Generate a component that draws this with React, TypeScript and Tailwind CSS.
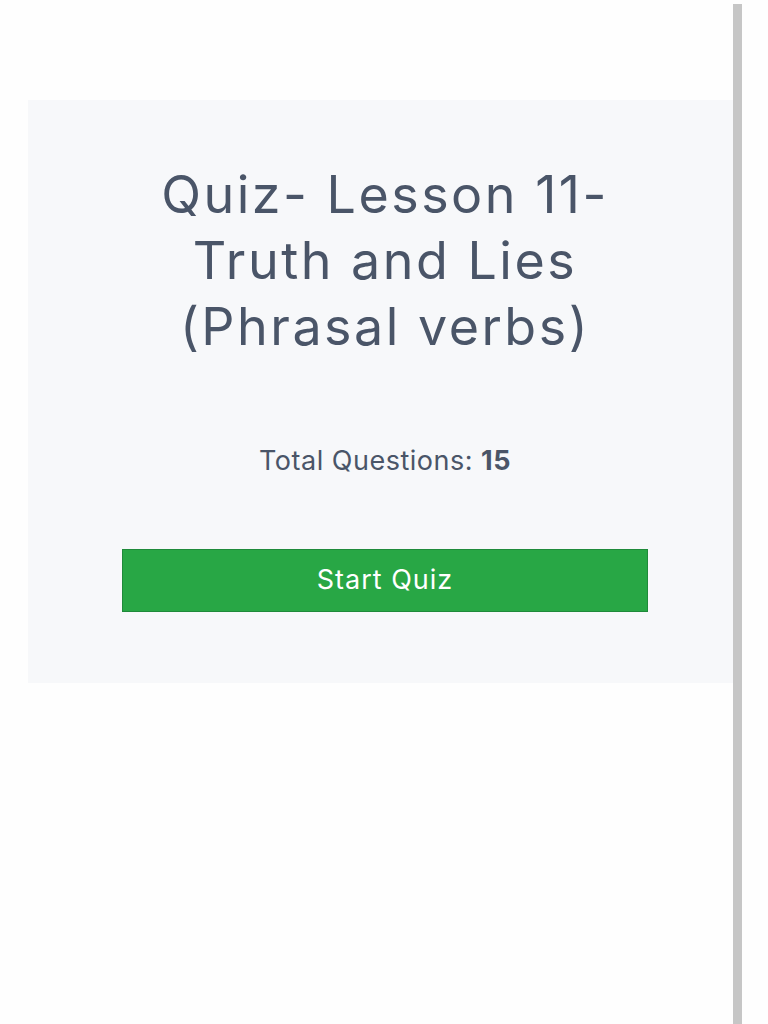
import React from 'react';

const quiz = {
  title: 'Quiz- Lesson 11- Truth and Lies (Phrasal verbs)',
  totalQuestions: 15,
};

export default function App() {
  return (
    <div
      className="relative h-[1024px] w-[768px] bg-[#fefefe] text-[#4a5568]"
      style={{ fontFamily: 'Inter, "Noto Sans", sans-serif' }}
    >
      <main className="pt-[100px] pr-[26px] pl-[28px]">
        {/* Quiz intro card */}
        <section className="flex h-[583px] flex-col items-center bg-[#f7f8fa] pt-[62px]">
          <h1 className="w-[540px] text-center text-[52px] leading-[66px] font-normal tracking-[2.5px]">
            {quiz.title}
          </h1>
          <p className="mt-[83px] text-[27px] leading-[36px] tracking-[0.5px]">
            Total Questions: <strong className="font-bold">{quiz.totalQuestions}</strong>
          </p>
          <button className="mt-[70px] h-[63px] w-[526px] border border-[#1f8a3a] bg-[#28a745] text-[27px] tracking-[1px] text-white">
            Start Quiz
          </button>
        </section>
      </main>
      {/* scrollbar strip */}
      <div className="absolute top-[4px] right-[26px] bottom-0 w-[9px] bg-[#c6c6c6]" />
    </div>
  );
}
